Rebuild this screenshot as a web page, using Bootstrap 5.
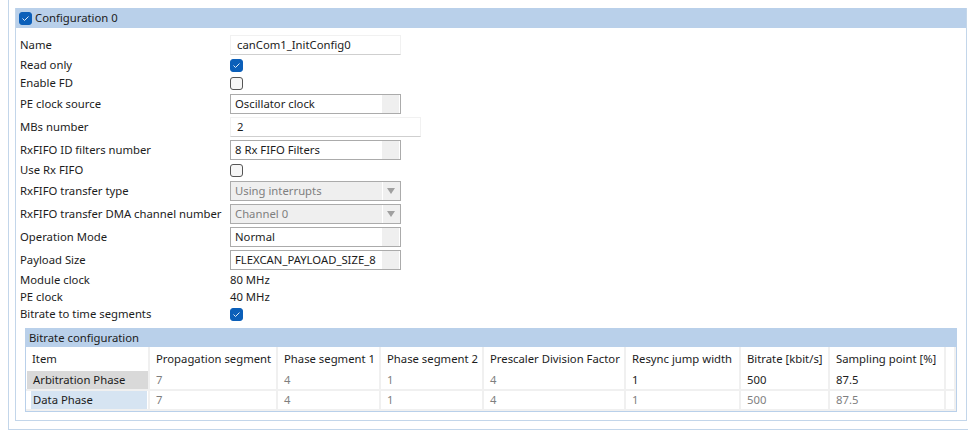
<!DOCTYPE html>
<html lang="en">
<head>
    <meta charset="UTF-8">
    <meta name="viewport" content="width=device-width, initial-scale=1.0">
    <title>Configuration 0</title>
    <link href="https://cdn.jsdelivr.net/npm/bootstrap@5.3.0/dist/css/bootstrap.min.css" rel="stylesheet">
    <style>
        html, body { height: 433px; overflow: hidden; }
        body {
            background: #fff;
            color: #1c1c1c;
            font-family: "Noto Sans", "Open Sans", sans-serif;
            font-size: 11.3px;
            line-height: 16px;
        }
        .outer-frame {
            margin-left: 8px;
            height: 430px;
            padding: 8px 0 8px 6px;
            border-left: 1px solid #c3d6ea;
            border-bottom: 1px solid #c3d6ea;
        }
        .cfg-panel {
            height: 100%;
            margin-right: 1px;
            border: 1px solid #c3d6ea;
            border-top: 0;
        }
        .panel-head {
            height: 20px;
            background: #b9d0ea;
            padding-left: 3px;
            gap: 3px;
        }
        .cfg-body { padding: 5px 9px 0 4px; }
        .field-row { height: 23px; }
        .plain-row { height: 18px; }
        .short-row { height: 16px; }
        .field-label { width: 210px; flex: none; white-space: nowrap; }
        .cfg-check.form-check-input {
            width: 13px;
            height: 13px;
            margin: 0;
            flex: none;
            border: 1px solid #555;
            border-radius: 3px;
            background-color: #f6f6f6;
        }
        .cfg-check.form-check-input:checked {
            background-color: #0b5fb9;
            border-color: #0b5fb9;
            background-size: 9px 9px;
            background-image: url("data:image/svg+xml,%3csvg xmlns='http://www.w3.org/2000/svg' viewBox='0 0 9 9'%3e%3cpath fill='none' stroke='%23dfeaf6' stroke-width='1' d='M1.5 4.5l2 2 4-4'/%3e%3c/svg%3e");
        }
        .text-box {
            width: 171px;
            height: 20px;
            padding: 0 6px;
            font: inherit;
            color: inherit;
            border: 1px solid #f1f1f1;
            border-bottom-color: #cfcfcf;
            border-radius: 0;
        }
        .text-box.wide-box { width: 191px; }
        .combo-box {
            width: 171px;
            height: 20px;
            padding-left: 4px;
            border: 1px solid #ababab;
            background: #fff;
        }
        .combo-text { flex: 1; white-space: nowrap; }
        .combo-btn { width: 17px; height: 18px; margin-right: 1px; background: #efefef; }
        .combo-box.is-off { background: #efefef; color: #7f7f7f; }
        .combo-box.is-off .combo-btn { border-left: 1px solid #fff; width: 18px; margin-right: 0; }
        .bitrate-group {
            height: 84px;
            margin-top: 5px;
            margin-left: 5px;
            border: 1px solid #b9d0ea;
            border-top: 0;
            overflow: hidden;
        }
        .group-head { height: 19px; background: #b9d0ea; padding-left: 3px; margin-right: -1px; }
        .bitrate-table { table-layout: fixed; width: 929px; font-size: 11.3px; color: #7f7f7f; }
        .bitrate-table th, .bitrate-table td { padding: 0 0 0 6px; border-bottom: 0; vertical-align: middle; font-weight: 400; white-space: nowrap; }
        .bitrate-table thead th {
            height: 24px;
            color: #1c1c1c;
            border-right: 2px solid #f0f0f0;
        }
        .bitrate-table tbody td { height: 19px; border-right: 2px solid #f0f0f0; border-bottom: 2px solid #f0f0f0; color: #7f7f7f; }
        .bitrate-table tbody td.live-val { color: #1c1c1c; }
        .bitrate-table tbody td.item-cell { padding: 0; color: #1c1c1c; }
        .item-fill { height: 18px; line-height: 18px; }
        .item-arb { margin-left: 1px; padding-left: 6px; background: #d9d9d9; }
        .item-data { margin: 0 1px 0 5px; padding-left: 2px; background: #d6e4f2; }
        .col-a { width: 123px; }
        .col-b { width: 128px; }
        .col-c, .col-d { width: 103px; }
        .col-e { width: 142px; }
        .col-f { width: 115px; }
        .col-g { width: 89px; }
        .col-h { width: 116px; }
        .col-i { width: 10px; }
    </style>
</head>
<body>
    <div class="outer-frame">
        <div class="cfg-panel">
            <div class="panel-head d-flex align-items-center">
                <input class="form-check-input cfg-check" type="checkbox" checked>
                <span>Configuration 0</span>
            </div>
            <div class="cfg-body">
                <div class="field-row d-flex align-items-center">
                    <div class="field-label">Name</div>
                    <input class="text-box" type="text" value="canCom1_InitConfig0">
                </div>
                <div class="plain-row d-flex align-items-center">
                    <div class="field-label">Read only</div>
                    <input class="form-check-input cfg-check" type="checkbox" checked>
                </div>
                <div class="plain-row d-flex align-items-center">
                    <div class="field-label">Enable FD</div>
                    <input class="form-check-input cfg-check" type="checkbox">
                </div>
                <div class="field-row d-flex align-items-center">
                    <div class="field-label">PE clock source</div>
                    <div class="combo-box d-flex align-items-center"><span class="combo-text">Oscillator clock</span><span class="combo-btn"></span></div>
                </div>
                <div class="field-row d-flex align-items-center">
                    <div class="field-label">MBs number</div>
                    <input class="text-box wide-box" type="text" value="2">
                </div>
                <div class="field-row d-flex align-items-center">
                    <div class="field-label">RxFIFO ID filters number</div>
                    <div class="combo-box d-flex align-items-center"><span class="combo-text">8 Rx FIFO Filters</span><span class="combo-btn"></span></div>
                </div>
                <div class="plain-row d-flex align-items-center">
                    <div class="field-label">Use Rx FIFO</div>
                    <input class="form-check-input cfg-check" type="checkbox">
                </div>
                <div class="field-row d-flex align-items-center">
                    <div class="field-label">RxFIFO transfer type</div>
                    <div class="combo-box is-off d-flex align-items-center"><span class="combo-text">Using interrupts</span><span class="combo-btn d-flex align-items-center justify-content-center"><svg width="9" height="6" viewBox="0 0 9 6"><path d="M0 0h8L4 6z" fill="#a0a0a0"/></svg></span></div>
                </div>
                <div class="field-row d-flex align-items-center">
                    <div class="field-label">RxFIFO transfer DMA channel number</div>
                    <div class="combo-box is-off d-flex align-items-center"><span class="combo-text">Channel 0</span><span class="combo-btn d-flex align-items-center justify-content-center"><svg width="9" height="6" viewBox="0 0 9 6"><path d="M0 0h8L4 6z" fill="#a0a0a0"/></svg></span></div>
                </div>
                <div class="field-row d-flex align-items-center">
                    <div class="field-label">Operation Mode</div>
                    <div class="combo-box d-flex align-items-center"><span class="combo-text">Normal</span><span class="combo-btn"></span></div>
                </div>
                <div class="field-row d-flex align-items-center">
                    <div class="field-label">Payload Size</div>
                    <div class="combo-box d-flex align-items-center"><span class="combo-text">FLEXCAN_PAYLOAD_SIZE_8</span><span class="combo-btn"></span></div>
                </div>
                <div class="plain-row d-flex align-items-center">
                    <div class="field-label">Module clock</div>
                    <span>80 MHz</span>
                </div>
                <div class="short-row d-flex align-items-center">
                    <div class="field-label">PE clock</div>
                    <span>40 MHz</span>
                </div>
                <div class="plain-row d-flex align-items-center">
                    <div class="field-label">Bitrate to time segments</div>
                    <input class="form-check-input cfg-check" type="checkbox" checked>
                </div>

                <div class="bitrate-group">
                    <div class="group-head d-flex align-items-center">Bitrate configuration</div>
                    <table class="table bitrate-table mb-0">
                        <thead>
                            <tr>
                                <th class="col-a">Item</th>
                                <th class="col-b">Propagation segment</th>
                                <th class="col-c">Phase segment 1</th>
                                <th class="col-d">Phase segment 2</th>
                                <th class="col-e">Prescaler Division Factor</th>
                                <th class="col-f">Resync jump width</th>
                                <th class="col-g">Bitrate [kbit/s]</th>
                                <th class="col-h">Sampling point [%]</th>
                                <th class="col-i"></th>
                            </tr>
                        </thead>
                        <tbody>
                            <tr>
                                <td class="item-cell"><div class="item-fill item-arb">Arbitration Phase</div></td>
                                <td>7</td><td>4</td><td>1</td><td>4</td>
                                <td class="live-val">1</td><td class="live-val">500</td><td class="live-val">87.5</td><td></td>
                            </tr>
                            <tr>
                                <td class="item-cell"><div class="item-fill item-data">Data Phase</div></td>
                                <td>7</td><td>4</td><td>1</td><td>4</td>
                                <td>1</td><td>500</td><td>87.5</td><td></td>
                            </tr>
                        </tbody>
                    </table>
                </div>
            </div>
        </div>
    </div>
    <script src="https://cdn.jsdelivr.net/npm/bootstrap@5.3.0/dist/js/bootstrap.bundle.min.js"></script>
</body>
</html>
